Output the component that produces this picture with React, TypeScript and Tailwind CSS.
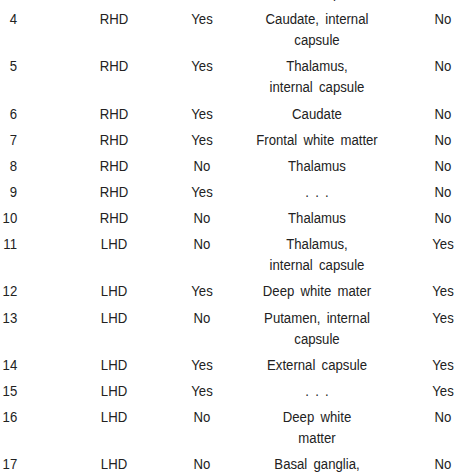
const rows: [string, string, string, string[], string][] = [
  ["3", "", "", ["", "internal capsule"], ""],
  ["4", "RHD", "Yes", ["Caudate, internal", "capsule"], "No"],
  ["5", "RHD", "Yes", ["Thalamus,", "internal capsule"], "No"],
  ["6", "RHD", "Yes", ["Caudate"], "No"],
  ["7", "RHD", "Yes", ["Frontal white matter"], "No"],
  ["8", "RHD", "No", ["Thalamus"], "No"],
  ["9", "RHD", "Yes", [". . ."], "No"],
  ["10", "RHD", "No", ["Thalamus"], "No"],
  ["11", "LHD", "No", ["Thalamus,", "internal capsule"], "Yes"],
  ["12", "LHD", "Yes", ["Deep white mater"], "Yes"],
  ["13", "LHD", "No", ["Putamen, internal", "capsule"], "Yes"],
  ["14", "LHD", "Yes", ["External capsule"], "Yes"],
  ["15", "LHD", "Yes", [". . ."], "Yes"],
  ["16", "LHD", "No", ["Deep white", "matter"], "No"],
  ["17", "LHD", "No", ["Basal ganglia,", "internal capsule"], "No"],
];

// condensed look: Liberation Sans squeezed horizontally
const cell = "text-center scale-x-[0.85]";

export default function App() {
  return (
    <div className="h-[474px] w-[474px] overflow-hidden bg-white text-[#222] font-['Liberation_Sans',Arial,sans-serif] text-[15.5px] leading-[21px] [word-spacing:3px]">
      <div className="-mt-[44px]">
        {rows.map(([id, side, a, site, b], i) => (
          <div
            key={i}
            className="grid grid-cols-[17px_67px_60px_28px_60px_5px_160px_16px_60px] pt-[5.15px]"
          >
            <div className={i === 0 ? "invisible" : "text-right scale-x-[0.85] origin-right"}>{id}</div>
            <div />
            <div className={cell}>{side}</div>
            <div />
            <div className={cell}>{a}</div>
            <div />
            <div className={cell}>
              {site.map((l, j) => (
                <div key={j}>{l || "\u00a0"}</div>
              ))}
            </div>
            <div />
            <div className={cell}>{b}</div>
          </div>
        ))}
      </div>
    </div>
  );
}
